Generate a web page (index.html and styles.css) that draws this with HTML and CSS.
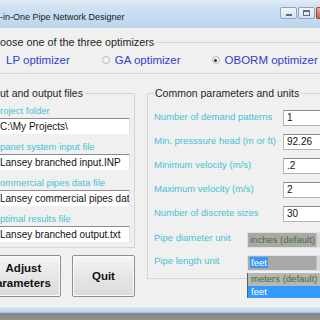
FILE: index.html
```html
<!DOCTYPE html>
<html>
<head>
<meta charset="utf-8">
<link rel="stylesheet" href="styles.css">
</head>
<body>
<div class="window">
  <div class="titlebar">
    <span class="title">-in-One Pipe Network Designer</span>
    <div class="ctrls">
      <span class="ctrl min"><i></i></span>
      <span class="ctrl max"><i></i></span>
      <span class="ctrl close"></span>
    </div>
  </div>
  <div class="client">
    <fieldset class="group opt">
      <legend>oose one of the three optimizers</legend>
      <div class="radios">
        <span class="radio">LP optimizer</span>
        <span class="radio"><span class="dot"></span>GA optimizer</span>
        <span class="radio"><span class="dot on"></span>OBORM optimizer</span>
      </div>
    </fieldset>
    <div class="cols">
      <div class="leftcol">
        <fieldset class="group files">
          <legend>ut and output files</legend>
          <div class="flabel">roject folder</div>
          <div class="tbox">C:\My Projects\</div>
          <div class="flabel">panet system input file</div>
          <div class="tbox">Lansey branched input.INP</div>
          <div class="flabel">ommercial pipes data file</div>
          <div class="tbox">Lansey commercial pipes data</div>
          <div class="flabel">ptimal results file</div>
          <div class="tbox">Lansey branched output.txt</div>
        </fieldset>
        <div class="btns">
          <div class="btn adjust">Adjust<br>arameters</div>
          <div class="btn quit">Quit</div>
        </div>
      </div>
      <fieldset class="group params">
        <legend>Common parameters and units</legend>
        <div class="prow"><span class="plabel">Number of demand patterns</span><span class="pinput">1</span></div>
        <div class="prow"><span class="plabel">Min. presssure head (m or ft)</span><span class="pinput">92.26</span></div>
        <div class="prow"><span class="plabel">Minimum velocity (m/s)</span><span class="pinput">.2</span></div>
        <div class="prow"><span class="plabel">Maximum velocity (m/s)</span><span class="pinput">2</span></div>
        <div class="prow"><span class="plabel">Number of discrete sizes</span><span class="pinput">30</span></div>
        <div class="srow first"><span class="slabel">Pipe diameter unit</span>
          <div class="select"><span class="stext">inches (default)</span><span class="sarrow"></span></div>
        </div>
        <div class="srow"><span class="slabel">Pipe length unit</span>
          <div class="select"><span class="stext"><span class="hl">feet</span></span><span class="sarrow"></span>
            <div class="list">
              <div class="opt1">meters (default)</div>
              <div class="opt2">feet</div>
            </div>
          </div>
        </div>
      </fieldset>
    </div>
  </div>
  <div class="frame"></div>
</div>
</body>
</html>
```

FILE: styles.css
```css
* { box-sizing: border-box; }
body {
  margin: 0;
  width: 320px;
  height: 320px;
  overflow: hidden;
  background: #f0f0f0;
  font-family: "Liberation Sans", Arial, sans-serif;
}
.window {
  width: 320px;
  height: 320px;
  display: flex;
  flex-direction: column;
}
.titlebar {
  height: 28px;
  flex: none;
  display: flex;
  justify-content: space-between;
  background: linear-gradient(#e4ecf4 0, #d2e3f3 5px, #c6dcf1 60%, #bdd6ee 100%);
  border-bottom: 1px solid #c2d1df;
}
.title {
  font-size: 9px;
  line-height: 12px;
  color: #1b1b1b;
  margin-top: 11px;
}
.ctrls {
  display: flex;
  gap: 1px;
  margin-top: 7px;
}
.ctrl {
  width: 17px;
  height: 12px;
  border: 1px solid #8ea5bc;
  border-radius: 2px;
  background: linear-gradient(#f2f6fa, #d7e2ed);
  display: flex;
  align-items: center;
  justify-content: center;
}
.min i { width: 6px; height: 2px; border: 1px solid #5e6f80; margin-top: 4px; }
.max i { width: 7px; height: 6px; border: 1px solid #5e6f80; border-top-width: 2px; }
.close {
  width: 4px;
  border-right: none;
  border-radius: 2px 0 0 2px;
  background: linear-gradient(#e9b1a4, #c9604c);
  border-color: #a04a3a;
}
.client {
  flex: 1;
  padding-top: 7px;
}
.group {
  margin: 0;
  border: 1px solid #d3d6d9;
  min-width: 0;
}
.group legend {
  font-size: 10.5px;
  line-height: 14px;
  color: #1e1e1e;
  padding: 0 2px 0 0;
  white-space: nowrap;
}
.opt {
  margin: 0 -10px 0 -4px;
  padding: 4px 0 6px 3px;
}
.opt legend { font-size: 10.8px; }
.radios {
  display: flex;
  gap: 32px;
  padding-left: 6px;
  height: 14px;
  align-items: center;
  font-size: 11.5px;
  color: #2f3fcb;
  white-space: nowrap;
}
.radio {
  display: flex;
  align-items: center;
  gap: 5px;
  line-height: 14px;
}
.radios .radio:last-child { margin-left: -1px; }
.dot {
  width: 8px;
  height: 8px;
  border-radius: 50%;
  border: 1px solid #b8bcc0;
  background: #f4f4f4;
  display: flex;
  align-items: center;
  justify-content: center;
}
.dot.on::after {
  content: "";
  width: 3px;
  height: 3px;
  border-radius: 50%;
  background: #2a2a2a;
}
.cols {
  display: flex;
  margin-top: 12px;
}
.leftcol {
  width: 139px;
  flex: none;
  margin-left: -4px;
  display: flex;
  flex-direction: column;
}
.files {
  padding: 0 4px 5px 3px;
}
.flabel {
  font-size: 9.5px;
  line-height: 14px;
  color: #45c2d2;
  margin-top: 6px;
  white-space: nowrap;
}
.files legend + .flabel { margin-top: 4px; }
.tbox {
  height: 16px;
  background: #fff;
  border-top: 1px solid #8d8d8d;
  border-right: 1px solid #e3e3e3;
  font-size: 10px;
  line-height: 15px;
  color: #111;
  white-space: nowrap;
  overflow: hidden;
}
.btns {
  display: flex;
  gap: 11px;
  margin-top: 7px;
}
.btn {
  height: 42px;
  border: 1px solid #8f8f8f;
  border-radius: 2px;
  background: linear-gradient(#f6f6f6, #e6e6e6 50%, #dcdcdc);
  box-shadow: inset 0 0 0 1px #fbfbfb;
  display: flex;
  align-items: center;
  justify-content: center;
  text-align: center;
  font-weight: bold;
  font-size: 11.5px;
  line-height: 15px;
  color: #111;
  white-space: nowrap;
}
.adjust { width: 76px; margin-left: -10px; }
.quit { width: 64px; }
.params {
  flex: 1;
  margin: 0 -12px 0 12px;
  padding: 6px 0 7px 6px;
  align-self: flex-start;
}
.params legend { padding: 0 2px 0 1px; }
.prow {
  display: flex;
  align-items: center;
  height: 24px;
}
.plabel, .slabel {
  font-size: 9.5px;
  color: #45c2d2;
  white-space: nowrap;
}
.plabel { width: 129px; flex: none; margin-top: -3px; }
.pinput {
  width: 45px;
  height: 16px;
  background: #fff;
  border: 1px solid #b0b3b8;
  border-top-color: #8a8d92;
  font-size: 10px;
  line-height: 14px;
  padding-left: 3px;
  color: #111;
}
.srow {
  display: flex;
  align-items: center;
  height: 16px;
  margin-top: 7px;
}
.srow.first { margin-top: 6px; }
.slabel { width: 93px; flex: none; margin-top: -5px; }
.select {
  position: relative;
  width: 80px;
  height: 16px;
  flex: none;
  display: flex;
  border: 1px solid #e2e2e2;
  background: #a8aaa8;
}
.stext {
  width: 68px;
  flex: none;
  font-size: 9.5px;
  line-height: 14px;
  color: #4f6c42;
  padding-left: 2px;
  white-space: nowrap;
}
.hl {
  background: #3399ff;
  color: #fff;
  padding: 0 1px;
}
.sarrow {
  flex: 1;
  background: #d8d8d8;
  border-left: 1px solid #c0c0c0;
}
.list {
  position: absolute;
  top: 17px;
  left: -1px;
  width: 81px;
  border-left: 1px solid #5e5e5e;
  font-size: 9.5px;
  line-height: 12px;
  white-space: nowrap;
}
.opt1 {
  background: #b5b6b5;
  color: #42702f;
  padding-left: 3px;
  height: 13px;
}
.opt2 {
  background: #3399ff;
  color: #fff;
  padding-left: 3px;
  height: 12px;
}
.frame {
  height: 14px;
  flex: none;
  background: linear-gradient(#f6f6f6 0, #f6f6f6 1px, #d3e3f2 1px, #c4d9ee 5px, #9db8d2 7px, #6e757c 8px, #8b8b8b 9px, #8e8e8e 100%);
}
```
